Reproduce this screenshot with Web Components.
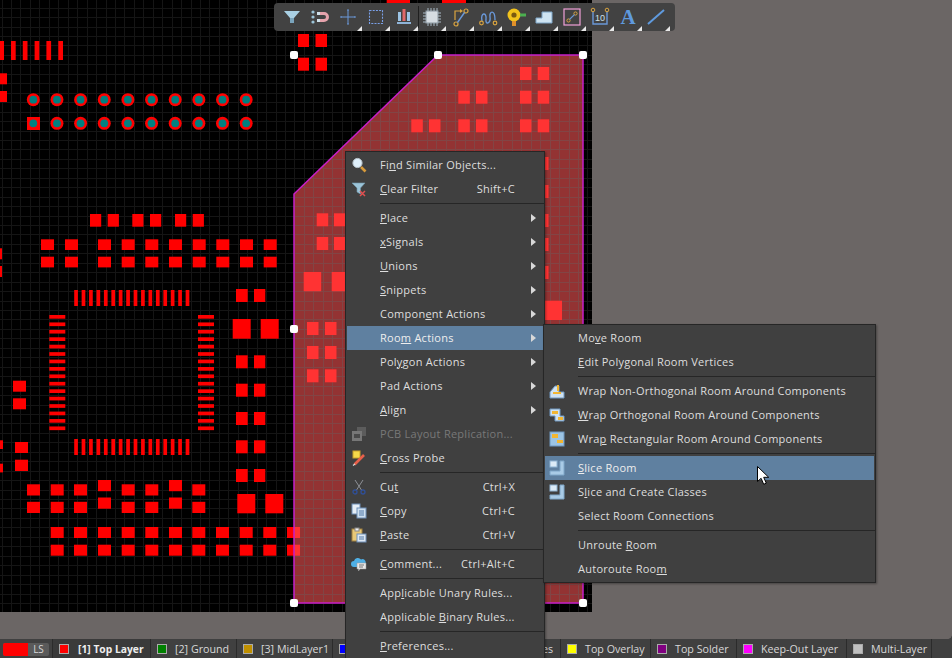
<!DOCTYPE html>
<html><head><meta charset="utf-8"><style>
html,body{margin:0;padding:0;width:952px;height:658px;overflow:hidden;background:#6b6665}
body{font-family:"Open Sans","Noto Sans","Liberation Sans",sans-serif;font-size:11px;position:relative}
</style></head><body>
<pcb-app>
  <pcb-board></pcb-board>
  <pcb-toolbar></pcb-toolbar>
  <layer-tabs slot="tabs"></layer-tabs>
</pcb-app>
<pop-menu style="left:345px;top:151px;width:200px">
  <menu-row><svg slot="icon" viewBox="0 0 16 16"><circle cx="6.5" cy="6" r="4.6" fill="#dff0fb" stroke="#b8c4cc"/><path d="M10 10l4.5 4.5" stroke="#d79a3a" stroke-width="2.6"/></svg>Fi<u>n</u>d Similar Objects...</menu-row>
  <menu-row shortcut="Shift+C"><svg slot="icon" viewBox="0 0 16 16"><path d="M1 2h13l-4.5 5v6l-3.5-2V7z" fill="#9cc4d8" stroke="#6f97ab" stroke-width=".6"/><path d="M9 10l5 5M14 10l-5 5" stroke="#e05050" stroke-width="1.5"/></svg><u>C</u>lear Filter</menu-row>
  <menu-sep></menu-sep>
  <menu-row arrow><u>P</u>lace</menu-row>
  <menu-row arrow><u>x</u>Signals</menu-row>
  <menu-row arrow><u>U</u>nions</menu-row>
  <menu-row arrow><u>S</u>nippets</menu-row>
  <menu-row arrow>Compon<u>e</u>nt Actions</menu-row>
  <menu-row arrow active>Roo<u>m</u> Actions</menu-row>
  <menu-row arrow>Pol<u>y</u>gon Actions</menu-row>
  <menu-row arrow>Pad Actions</menu-row>
  <menu-row arrow><u>A</u>lign</menu-row>
  <menu-row disabled><svg slot="icon" viewBox="0 0 16 16"><rect x="6" y="1" width="9" height="9" fill="#5c5c5c"/><rect x="1" y="5" width="10" height="10" fill="#777"/><path d="M3 8h6v4H3z" fill="#4a4a4a"/></svg>PCB Layout Replication...</menu-row>
  <menu-row><svg slot="icon" viewBox="0 0 16 16"><rect x="2" y="1" width="7" height="7" fill="#f5d94a" stroke="#c9a22a"/><path d="M13 5L3.5 14.5" stroke="#e8604a" stroke-width="2.6"/><path d="M4 14l-2 1.5" stroke="#ddd" stroke-width="1.2"/></svg><u>C</u>ross Probe</menu-row>
  <menu-sep></menu-sep>
  <menu-row shortcut="Ctrl+X"><svg slot="icon" viewBox="0 0 16 16" fill="none"><path d="M4 1l6.5 10M12 1L5.5 11" stroke="#8d9096"/><circle cx="4" cy="13" r="2" stroke="#2f4f98" stroke-width="1.3"/><circle cx="12" cy="13" r="2" stroke="#2f4f98" stroke-width="1.3"/></svg>Cu<u>t</u></menu-row>
  <menu-row shortcut="Ctrl+C"><svg slot="icon" viewBox="0 0 16 16"><rect x="1" y="1" width="8" height="10" fill="#e6eef6" stroke="#6f8fb8"/><rect x="6" y="5" width="9" height="10" fill="#cfe0f0" stroke="#6f8fb8"/><path d="M8 8h5M8 10h5M8 12h5" stroke="#5078a8"/></svg><u>C</u>opy</menu-row>
  <menu-row shortcut="Ctrl+V"><svg slot="icon" viewBox="0 0 16 16"><rect x="1" y="2" width="10" height="12" fill="#e8c878" stroke="#a08040"/><rect x="4" y="1" width="4" height="3" fill="#f0f0f0" stroke="#888"/><rect x="6" y="7" width="9" height="8" fill="#dde8f4" stroke="#6f8fb8"/><path d="M8 10h5M8 12h5" stroke="#5078a8"/></svg><u>P</u>aste</menu-row>
  <menu-sep></menu-sep>
  <menu-row shortcut="Ctrl+Alt+C"><svg slot="icon" viewBox="0 0 16 16"><path d="M3 11a3 3 0 0 1 0-6 4 4 0 0 1 7-1.5A3 3 0 0 1 13 9v2z" fill="#4fb0e6"/><path d="M6 7h9v6H9l-1.5 2v-2H6z" fill="#e8e8e8" stroke="#999" stroke-width=".5"/><path d="M8 9h5M8 11h4" stroke="#777"/></svg><u>C</u>omment...</menu-row>
  <menu-sep></menu-sep>
  <menu-row>App<u>l</u>icable Unary Rules...</menu-row>
  <menu-row>Applicable <u>B</u>inary Rules...</menu-row>
  <menu-sep></menu-sep>
  <menu-row><u>P</u>references...</menu-row>
</pop-menu>
<pop-menu style="left:543px;top:324px;width:333px">
  <menu-row>Mo<u>v</u>e Room</menu-row>
  <menu-row><u>E</u>dit Polygonal Room Vertices</menu-row>
  <menu-sep></menu-sep>
  <menu-row><svg slot="icon" viewBox="0 0 16 16"><path d="M1 15V9l5-6h4v6h5v6z" fill="#cfe2f2" stroke="#6f97c0"/><path d="M9 2v6M4 10h8" stroke="#f2b632" stroke-width="2"/></svg>Wrap Non-Orthogonal Room Around Components</menu-row>
  <menu-row><svg slot="icon" viewBox="0 0 16 16"><path d="M1 2h10v7h4v5H6v-5H1z" fill="#cfe2f2" stroke="#6f97c0"/><rect x="3" y="4" width="6" height="3" fill="#f2b632"/><rect x="9" y="10" width="5" height="3" fill="#f2b632"/></svg><u>W</u>rap Orthogonal Room Around Components</menu-row>
  <menu-row><svg slot="icon" viewBox="0 0 16 16"><rect x="1" y="1" width="14" height="14" fill="#9cc4e4" stroke="#6f97c0"/><rect x="3" y="3" width="6" height="4" fill="#f2b632"/><rect x="8" y="9" width="6" height="3" fill="#f2b632"/></svg>Wra<u>p</u> Rectangular Room Around Components</menu-row>
  <menu-sep></menu-sep>
  <menu-row active><svg slot="icon" viewBox="0 0 16 16"><rect x="1" y="1" width="7" height="6" fill="#dcebf7" stroke="#8fb4d4"/><path d="M11 1h4v14H1v-4h10z" fill="#a9cbe6" stroke="#7fa6c8"/></svg><u>S</u>lice Room</menu-row>
  <menu-row><svg slot="icon" viewBox="0 0 16 16"><rect x="1" y="1" width="7" height="6" fill="#dcebf7" stroke="#8fb4d4"/><path d="M11 1h4v14H1v-4h10z" fill="#a9cbe6" stroke="#7fa6c8"/></svg>S<u>l</u>ice and Create Classes</menu-row>
  <menu-row>Select Room Connections</menu-row>
  <menu-sep></menu-sep>
  <menu-row>Unroute <u>R</u>oom</menu-row>
  <menu-row>Autoroute Roo<u>m</u></menu-row>
</pop-menu>
<svg id="cur" style="position:absolute;left:757px;top:466px" width="14" height="20" viewBox="0 0 14 20"><path d="M.5.5v15l3.6-3.2 2.6 6 2.6-1.1-2.6-5.9h5z" fill="#fff" stroke="#000"/></svg>
<script>
function def(name, css, html, init){
  customElements.define(name, class extends HTMLElement{
    constructor(){super();const r=this.attachShadow({mode:'open'});r.innerHTML='<style>'+css+'</style>'+html;}
    connectedCallback(){ if(init) init.call(this,this.shadowRoot); }
  });
}
def('pcb-app',
 ':host{display:flex;flex-direction:column;width:952px;height:658px}.work{position:relative;flex:1;background:#6b6665;overflow:hidden}.tabs{height:19px;background:#404040}.cap{position:absolute;right:0;bottom:0;width:4px;height:4px;background:radial-gradient(circle at 0 0,transparent 3.5px,#404040 4px)}',
 '<div class="work"><slot></slot><div class="cap"></div></div><div class="tabs"><slot name="tabs"></slot></div>');
def('pcb-board',':host{display:block;width:592px;height:612px;background:#000}svg{display:block}',
 '<svg id="s" width="592" height="612" viewBox="0 0 592 612"></svg>',
 function(root){
  const R=[];const rect=(x,y,w,h)=>R.push(`<rect x="${x}" y="${y}" width="${w}" height="${h}"/>`);
  [-.7,11,22.8,34.6,46.4,58.3].forEach(x=>rect(x,41,4.7,19));
  rect(0,73.3,7,11);rect(0,91,7,11);
  [90,107.7,132.3,150,175,192.7].forEach(x=>rect(x,214,11.2,12.7));
  [41,65,98,121.7,145.3,169,192.7,216.3,240,263.7].forEach(x=>{rect(x,239.3,13,10.7);rect(x,256.7,13,10.7)});
  rect(0,248.3,2,11);rect(0,266,2,11);
  for(let i=0;i<16;i++){const p=74.2+i*7.43;rect(p,290,3.7,16);rect(p,439,3.7,16);
    const q=315+i*7.43;rect(49.3,q,16,3.7);rect(198,q,16,3.7);}
  [289,355.3,383.7,412,440.3,469].forEach(y=>{rect(236,y,11.7,13);rect(254,y,11.3,13)});
  rect(232.7,319,18,19.7);rect(260.7,319,18,19.7);
  rect(237.3,494,18,19.3);rect(265.3,494,18,19.3);
  rect(13,380.7,13,11);rect(13,398.3,13,11);
  rect(0,440.3,3,8.7);rect(0,463.7,3,8.7);
  rect(15,442,13,11);rect(15,459.7,13,11.3);
  [27,50.7,74,98,121.7,145.3,169,192.3].forEach((x,i)=>{const u=(i==3||i==6)?480:484.3;rect(x,u,13,11.2);rect(x,u+17.5,13,11.2)});
  [50.7,74,98,121.7,145.3,169,192.3,216,239.7,263.3,287].forEach(x=>{rect(x,527,13,11);rect(x,544.7,13,11)});
  [34,57.7].forEach(y=>{rect(298,y,11,13);rect(315.5,y,11.5,13)});
  rect(386.7,-2,23.3,5);rect(442,-2,24,5);
  [[520,67],[537.7,67],[520,90.7],[537.7,90.7],[458.3,90.7],[476,90.7],[520,119.3],[537.7,119.3],[458.3,119.3],[476,119.3],[411.3,119.3],[429,119.3],
   [316.7,213.3],[334,213.3],[316.7,237],[334,237],[307,322],[325,322],[307,346],[325,346],[307,369.3],[325,369.3],
   [537,157],[537,185],[537,214],[537,238],[537,266]].forEach(([x,y])=>rect(x,y,11.5,13));
  rect(303.7,272,17.5,19.3);rect(331.7,272,18,19.3);rect(544,300.7,18,19.3);
  let gv='',gh='',G=9.45;
  for(let x=1.55;x<592;x+=G)gv+=`M${Math.round(x)+.5} 0V612`;
  for(let y=7.65;y<612;y+=G)gh+=`M0 ${Math.round(y)+.5}H592`;
  let th='';const xs=[];for(let i=0;i<10;i++)xs.push(33.3+i*23.65);
  xs.forEach((x,i)=>{th+=`<circle cx="${x}" cy="99.7" r="6.5" fill="#f00"/>`;
    th+= i==0?`<rect x="27" y="117" width="13" height="13" fill="#f00"/>`:`<circle cx="${x}" cy="123.3" r="6.5" fill="#f00"/>`;
    th+=`<circle cx="${x}" cy="99.7" r="3.9" fill="#008080"/><circle cx="${x}" cy="123.3" r="3.9" fill="#008080"/>`;});
  const P='M294 194L438 55H583V603H294Z';
  const hs=[[294,55],[438,55],[583,55],[294,329],[294,603],[583,603]].map(([x,y])=>`<rect x="${x-4}" y="${y-4}" width="8" height="8" rx="2" fill="#fff"/>`).join('');
  root.getElementById('s').innerHTML=
   `<path d="${gv+gh}" stroke="#151515" fill="none" shape-rendering="crispEdges"/>`+
   `<g fill="#f00">${R.join('')}</g>`+th+
   `<path d="${P}" fill="#933333"/>`+
   `<clipPath id="c"><path d="${P}"/></clipPath><path clip-path="url(#c)" d="${gv+gh}" stroke="#824545" fill="none" shape-rendering="crispEdges"/>`+
   `<g clip-path="url(#c)" fill="#ff3333">${R.join('')}</g>`+
   `<path d="${P}" fill="none" stroke="#c81ec8" stroke-width="1.5"/>`+hs;
 });
const TIC=[
 `<path d="M3 5h16l-6 7v5h-4v-5z" fill="#a9d0e4"/><path d="M9 12h4v5H9z" fill="#7aa4bc"/>`,
 `<circle cx="4" cy="6" r="1.6" fill="#9cc4d8"/><circle cx="4" cy="11" r="1.6" fill="#9cc4d8"/><circle cx="4" cy="16" r="1.6" fill="#9cc4d8"/><path d="M8 6h7a4.5 4.5 0 0 1 0 10H8v-3h7a1.6 1.6 0 0 0 0-4H8z" fill="#e6a3ac"/><path d="M8 6h3v3H8zM8 13h3v3H8z" fill="#cfe0ea"/>`,
 `<path d="M11 4v14M4 11h14" stroke="#6a98d8"/><path d="M10 4h2M10 18h2M4 10v2M18 10v2" stroke="#6a98d8"/>`,
 `<rect x="4.5" y="4.5" width="13" height="13" fill="none" stroke="#7aa0e8" stroke-width="1.1" stroke-dasharray="2 1.2"/>`,
 `<rect x="5" y="6" width="3" height="9" fill="#9cc4e4"/><rect x="9.5" y="3" width="3" height="12" fill="#e06868"/><rect x="14" y="6" width="3" height="9" fill="#9cc4e4"/><path d="M4 17h14" stroke="#8fb4d8" stroke-width="2"/>`,
 `<rect x="5" y="5" width="12" height="12" fill="#d6dde2" stroke="#8a96a0"/><path d="M7 2v3M10 2v3M13 2v3M16 2v3M7 17v3M10 17v3M13 17v3M16 17v3M2 7h3M2 10h3M2 13h3M2 16h3M17 7h3M17 10h3M17 13h3M17 16h3" stroke="#a9bac6"/>`,
 `<circle cx="7" cy="18" r="2" fill="none" stroke="#d9a440" stroke-width="1.2"/><circle cx="17" cy="5" r="2" fill="none" stroke="#d9a440" stroke-width="1.2"/><path d="M8.5 16.5L15.5 6.5" stroke="#6a98d8" stroke-width="1.4"/><path d="M6 14V5h6" stroke="#d9a440" stroke-width="1.2" fill="none"/><path d="M11 3l3 2-3 2z" fill="#d9a440"/>`,
 `<path d="M5 15c-2-9 5-9 4-2s5 4 4-2 5-8 5 3" stroke="#6a98d8" stroke-width="1.4" fill="none"/><circle cx="4.5" cy="17" r="1.8" fill="none" stroke="#d9a440" stroke-width="1.2"/><circle cx="18" cy="17" r="1.8" fill="none" stroke="#d9a440" stroke-width="1.2"/>`,
 `<circle cx="9" cy="9" r="6.5" fill="#f2c31c"/><circle cx="9" cy="9" r="2.6" fill="#7a5a10"/><path d="M15 7.5h6v3h-6z" fill="#4caf50"/><path d="M7 15h4v5H7z" fill="#e0902a"/>`,
 `<path d="M3 17v-5h6V6h10v11z" fill="#cfe4f2" stroke="#7fa6c8"/>`,
 `<rect x="3" y="3" width="16" height="16" fill="none" stroke="#f0a0d8" stroke-width="1.2"/><circle cx="7.5" cy="14.5" r="1.6" fill="none" stroke="#d9a440"/><circle cx="14.5" cy="7.5" r="1.6" fill="none" stroke="#d9a440"/><path d="M8.6 13.4l4.8-4.8" stroke="#6a98d8" stroke-width="1.3"/>`,
 `<path d="M4 5v13h14V5" fill="none" stroke="#6a98d8" stroke-width="1.4"/><circle cx="4" cy="4" r="1.8" fill="none" stroke="#d9a440"/><circle cx="18" cy="4" r="1.8" fill="none" stroke="#d9a440"/><text x="11" y="15" font-size="9" font-family="Liberation Sans" fill="#cfe0ea" text-anchor="middle">10</text>`,
 null,
 `<path d="M3 18L19 4" stroke="#5f9ade" stroke-width="2"/>`];
def('pcb-toolbar',
 ':host{position:absolute;left:274px;top:3px;width:401px;height:28px;display:flex;align-items:center;background:#424242;border-radius:4px;padding-left:4px;box-sizing:border-box}'+
 '.b{position:relative;width:28px;height:28px;display:flex;align-items:center;justify-content:center;flex:none}svg{width:22px;height:22px;display:block}'+
 '.t{position:absolute;right:0;bottom:0;width:0;height:0;border-style:solid;border-width:0 0 5px 5px;border-color:transparent transparent #e8e8e8 transparent}'+
 '.sep{width:1px;height:22px;background:#1f1f1f;margin:0 -1px 0 0;flex:none}'+
 '.A{font:700 21px/24px "Liberation Serif",serif;color:#5f9ade}',
 '<span id="w" style="display:contents"></span>',
 function(r){let h='';TIC.forEach((ic,i)=>{const c=ic?`<svg viewBox="0 0 22 22">${ic}</svg>`:'<span class="A">A</span>';h+=`<div class="b">${c}${i>=2?'<i class="t"></i>':''}</div>`;if(i==4)h+='<div class="sep"></div>';});r.getElementById('w').innerHTML=h;});
def('layer-tabs',
 ':host{display:flex;height:19px;align-items:stretch;color:#d8d8d8;font-size:10.7px;font-family:"Open Sans","Noto Sans",sans-serif}'+
 '.ls{display:flex;width:46px;height:13px;margin:4px 3px 0 3px;background:#5a5a5a;border-radius:2px;overflow:hidden;font-size:10px;line-height:13px}.ls b{width:25px;background:#f00}.ls span{flex:1;text-align:center}'+
 '.t{display:flex;align-items:center;padding:0 6px;border-right:1px solid #2b2b2b;white-space:nowrap;box-sizing:border-box}'+
 '.t i{width:10px;height:10px;border:1px solid #aaa;box-sizing:border-box;margin-right:8px;flex:none}.a{font-weight:700;font-size:10.3px;background:#3a3a3a;border-left:1px solid #2b2b2b;color:#eee}.a i{margin-right:9px}',
 '<div class="ls"><b></b><span>LS</span></div>'+
 '<div class="t a" style="width:99px"><i style="background:#f00"></i>[1] Top Layer</div>'+
 '<div class="t" style="width:86px"><i style="background:#008000"></i>[2] Ground</div>'+
 '<div class="t" style="width:96px"><i style="background:#c09000"></i>[3] MidLayer1</div>'+
 '<div class="t" style="width:228px;justify-content:space-between;padding-right:7px"><i style="background:#00f"></i>es</div>'+
 '<div class="t" style="width:90px"><i style="background:#ff0"></i>Top Overlay</div>'+
 '<div class="t" style="width:86px"><i style="background:#800080"></i>Top Solder</div>'+
 '<div class="t" style="width:110px"><i style="background:#f0f"></i>Keep-Out Layer</div>'+
 '<div class="t" style="width:85px"><i style="background:#c0c0c0"></i>Multi-Layer</div>');
def('pop-menu',
 ':host{position:absolute;display:block;box-sizing:border-box;background:#404040;border:1px solid #262626;padding:1px;box-shadow:1px 1px 2px rgba(0,0,0,.35)}',
 '<slot></slot>');
def('menu-row',
 ':host{display:grid;grid-template-columns:33px 1fr auto 28px;align-items:center;height:24px;color:#dedede;white-space:nowrap;letter-spacing:.26px}'+
 ':host([active]){background:#5f80a0;color:#eee}:host([disabled]){color:#787878}'+
 '.ic{display:flex;padding-left:4px}::slotted(svg){width:16px;height:16px;display:block}.l,#k{padding-bottom:2px}'+
 '.ar{width:0;height:0;border-style:solid;border-width:4px 0 4px 5px;border-color:transparent transparent transparent #d8d8d8;margin-left:16px;visibility:hidden}:host([arrow]) .ar{visibility:visible}',
 '<div class="ic"><slot name="icon"></slot></div><div class="l"><slot></slot></div><div id="k"></div><div class="ar"></div>',
 function(r){r.getElementById('k').textContent=this.getAttribute('shortcut')||'';});
def('menu-sep',':host{display:block;height:5px;margin-left:33px;margin-right:-1px;position:relative}div{height:1px;background:#262626;margin-top:2px;position:absolute;left:0;right:0}','<div></div>');
</script>
</body></html>
